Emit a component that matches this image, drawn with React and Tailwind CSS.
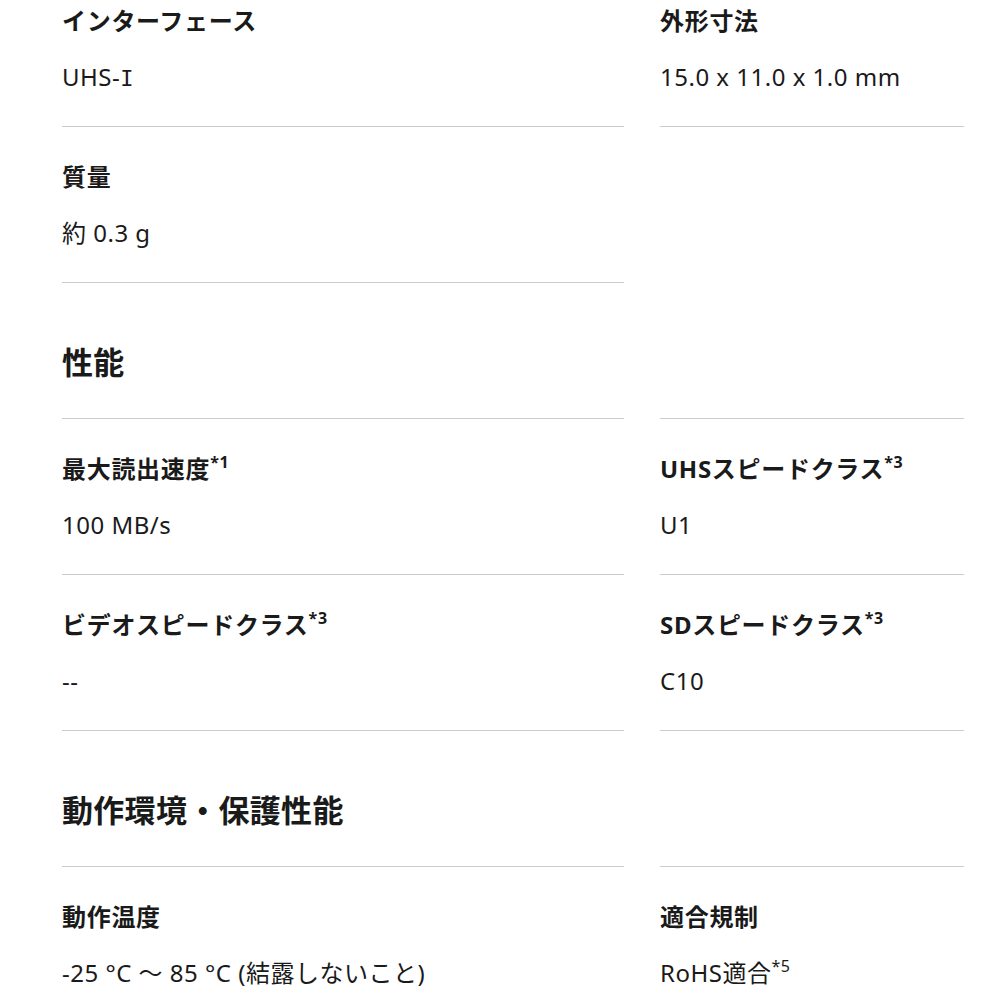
const font = { fontFamily: '"Noto Sans", "Noto Sans CJK JP", sans-serif' };

const sections = [
  {
    title: null,
    items: [
      {
        label: 'インターフェース',
        value: (
          <>
            UHS-<span style={{ fontFamily: '"DejaVu Sans Mono", monospace' }} className="text-[22px] leading-none">I</span>
          </>
        ),
      },
      { label: '外形寸法', value: '15.0 x 11.0 x 1.0 mm' },
      { label: '質量', value: '約 0.3 g' },
    ],
  },
  {
    title: '性能',
    items: [
      { label: '最大読出速度', note: '*1', value: '100 MB/s' },
      { label: 'UHSスピードクラス', note: '*3', value: 'U1' },
      { label: 'ビデオスピードクラス', note: '*3', value: '--' },
      { label: 'SDスピードクラス', note: '*3', value: 'C10' },
    ],
  },
  {
    title: '動作環境・保護性能',
    items: [
      { label: '動作温度', value: '-25 °C ～ 85 °C (結露しないこと)' },
      { label: '適合規制', value: 'RoHS適合', valueNote: '*5' },
    ],
  },
];

function SpecItem({ item, first, top }) {
  return (
    <div
      className={`border-b border-[#cccccc] pb-[31px] ${first ? 'pt-[3px]' : 'pt-8'} ${top ? 'border-t' : ''}`}
    >
      <div className="text-[24px] leading-[36px] font-bold tracking-[0.7px] text-[#1a1a1a]">
        {item.label}
        {item.note && <sup className="text-[16px] top-[-10px]">{item.note}</sup>}
      </div>
      <div className="mt-5 h-9 text-[24px] leading-[36px] tracking-[0.5px] text-[#1a1a1a]">
        {item.value}
        {item.valueNote && <sup className="text-[16px] top-[-10px]">{item.valueNote}</sup>}
      </div>
    </div>
  );
}

export default function App() {
  return (
    <div className="min-h-screen bg-white pl-[62px]" style={font}>
      <div className="w-[902px]">
        {sections.map((section, si) => (
          <section key={si}>
            {section.title && (
              <h2 className="mt-[55px] mb-[32px] text-[31px] leading-[48px] font-bold tracking-[0.3px] text-[#1a1a1a]">
                {section.title}
              </h2>
            )}
            <div className="grid grid-cols-[562px_304px] gap-x-9 items-start">
              {section.items.map((item, i) => (
                <SpecItem
                  key={i}
                  item={item}
                  first={si === 0 && i < 2}
                  top={si > 0 && i < 2}
                />
              ))}
            </div>
          </section>
        ))}
      </div>
    </div>
  );
}
